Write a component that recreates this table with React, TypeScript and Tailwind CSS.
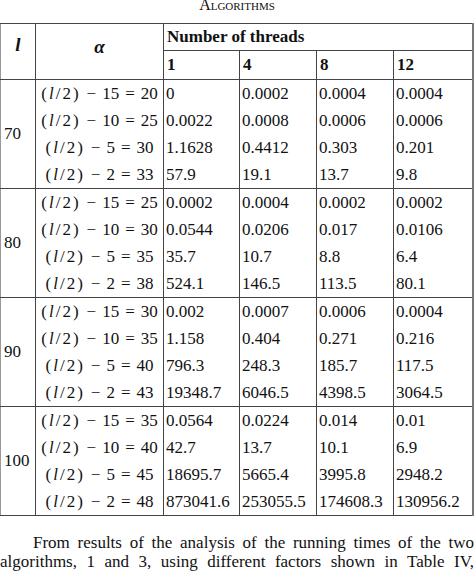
import React from "react";

type Group = { l: string; rows: { a: [string, string]; v: string[] }[] };

const groups: Group[] = [
	{
		l: "70",
		rows: [
			{ a: ["15", "20"], v: ["0", "0.0002", "0.0004", "0.0004"] },
			{ a: ["10", "25"], v: ["0.0022", "0.0008", "0.0006", "0.0006"] },
			{ a: ["5", "30"], v: ["1.1628", "0.4412", "0.303", "0.201"] },
			{ a: ["2", "33"], v: ["57.9", "19.1", "13.7", "9.8"] },
		],
	},
	{
		l: "80",
		rows: [
			{ a: ["15", "25"], v: ["0.0002", "0.0004", "0.0002", "0.0002"] },
			{ a: ["10", "30"], v: ["0.0544", "0.0206", "0.017", "0.0106"] },
			{ a: ["5", "35"], v: ["35.7", "10.7", "8.8", "6.4"] },
			{ a: ["2", "38"], v: ["524.1", "146.5", "113.5", "80.1"] },
		],
	},
	{
		l: "90",
		rows: [
			{ a: ["15", "30"], v: ["0.002", "0.0007", "0.0006", "0.0004"] },
			{ a: ["10", "35"], v: ["1.158", "0.404", "0.271", "0.216"] },
			{ a: ["5", "40"], v: ["796.3", "248.3", "185.7", "117.5"] },
			{ a: ["2", "43"], v: ["19348.7", "6046.5", "4398.5", "3064.5"] },
		],
	},
	{
		l: "100",
		rows: [
			{ a: ["15", "35"], v: ["0.0564", "0.0224", "0.014", "0.01"] },
			{ a: ["10", "40"], v: ["42.7", "13.7", "10.1", "6.9"] },
			{ a: ["5", "45"], v: ["18695.7", "5665.4", "3995.8", "2948.2"] },
			{ a: ["2", "48"], v: ["873041.6", "253055.5", "174608.3", "130956.2"] },
		],
	},
];

function Alpha({ k, r }: { k: string; r: string }) {
	return (
		<span className="whitespace-nowrap">
			<span className="tracking-[2px]">
				(<i>l</i>/2)
			</span>
			<span className="mx-[6px]">−</span>
			{k}
			<span className="mx-[6px]">=</span>
			{r}
		</span>
	);
}

const line = "border-[#444]";
const serif = "font-['Liberation_Serif','Times_New_Roman',serif]";

export default function App() {
	return (
		<main className={`w-[474px] h-[571px] overflow-hidden bg-white text-[#111] ${serif}`}>
			<div className="-mt-[3px] text-center text-[16px] leading-4 [font-variant:small-caps]">
				Algorithms
			</div>

			<table
				className={`mt-[10px] w-[472px] table-fixed border-collapse text-[17px] leading-[20px] text-[#111] ${serif}`}>
				<colgroup>
					<col className="w-[35px]" />
					<col className="w-[128px]" />
					<col className="w-[76px]" />
					<col className="w-[77px]" />
					<col className="w-[77px]" />
					<col className="w-[79px]" />
				</colgroup>
				<thead>
					<tr className="h-[27px]">
						<th
							rowSpan={2}
							className={`border border-l-[#999] border-r ${line} border-t align-top pt-[11px] text-center font-bold italic text-[19px]`}>
							l
						</th>
						<th
							rowSpan={2}
							className={`border ${line} align-top pt-[13px] text-center font-bold italic text-[19px]`}>
							α
						</th>
						<th
							colSpan={4}
							className={`border ${line} border-r-2 border-r-[#777] px-[3px] text-left font-bold`}>
							Number of threads
						</th>
					</tr>
					<tr className="h-[29px]">
						{["1", "4", "8", "12"].map((t, i) => (
							<th
								key={t}
								className={`border ${line} ${i === 3 ? "border-r-2 border-r-[#777]" : ""} px-[3px] text-left font-bold`}>
								{t}
							</th>
						))}
					</tr>
				</thead>
				{groups.map((g) => (
					<tbody key={g.l}>
						{g.rows.map((row, ri) => (
							<tr key={ri} className={`h-[27px] ${ri === 0 ? `border-t ${line}` : ""}`}>
								{ri === 0 && (
									<td
										rowSpan={4}
										className={`border-l border-l-[#999] border-r ${line} border-b px-[3px] align-middle`}>
										{g.l}
									</td>
								)}
								<td className={`border-r ${line} text-center leading-[27px]`}>
									<Alpha k={row.a[0]} r={row.a[1]} />
								</td>
								{row.v.map((v, vi) => (
									<td
										key={vi}
										className={`${vi === 3 ? "border-r-2 border-r-[#777]" : `border-r ${line}`} px-[2px] leading-[27px] whitespace-nowrap`}>
										{v}
									</td>
								))}
							</tr>
						))}
					</tbody>
				))}
				<tfoot>
					<tr className={`border-t ${line}`}>
						<td colSpan={6} className="h-0 p-0" />
					</tr>
				</tfoot>
			</table>

			<div className="mt-[17px] text-[17px] leading-[19px] text-justify [text-align-last:justify]">
				<div className="pl-[33px]">
					From results of the analysis of the running times of the two
				</div>
				<div>algorithms, 1 and 3, using different factors shown in Table IV,</div>
				<div>we can make the following remarks. First, in respect of the</div>
			</div>
		</main>
	);
}
